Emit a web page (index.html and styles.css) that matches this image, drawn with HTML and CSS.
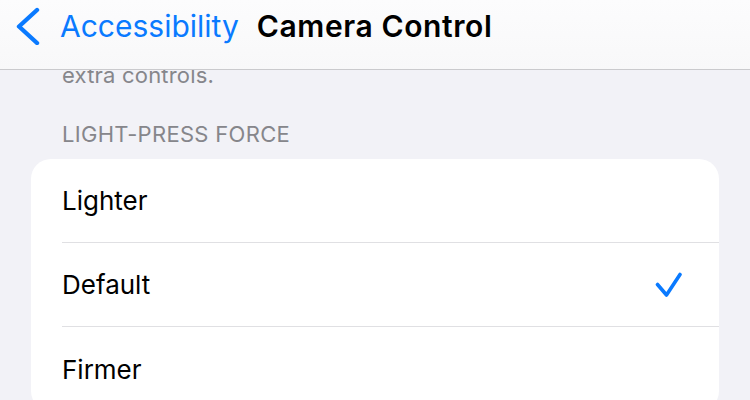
FILE: index.html
```html
<!DOCTYPE html>
<html lang="en">
<head>
<meta charset="utf-8">
<title>Camera Control</title>
<link rel="stylesheet" href="styles.css">
</head>
<body>
<div class="screen">
  <header class="nav">
    <a class="back">
      <svg class="chev" width="24" height="38" viewBox="0 0 24 38"><path d="M21 3 L3 19.5 L21 36" fill="none" stroke="#0a7aff" stroke-width="4.4" stroke-linecap="round" stroke-linejoin="round"/></svg>
      <span class="back-label">Accessibility</span>
    </a>
    <h1 class="title">Camera Control</h1>
  </header>
  <main class="content">
    <div class="clip">
      <p class="footnote">extra controls.</p>
    </div>
    <h2 class="section-head">LIGHT-PRESS FORCE</h2>
    <ul class="card">
      <li class="row"><div class="row-inner"><span class="label">Lighter</span></div></li>
      <li class="row"><div class="row-inner"><span class="label">Default</span>
        <svg class="check" width="28" height="28" viewBox="0 0 28 28"><path d="M2.5 13.5 L11.5 24 L25 3.5" fill="none" stroke="#0a7aff" stroke-width="3.6" stroke-linecap="round" stroke-linejoin="round"/></svg>
      </div></li>
      <li class="row last"><div class="row-inner"><span class="label">Firmer</span></div></li>
    </ul>
  </main>
</div>
</body>
</html>
```
FILE: styles.css
```css
* { box-sizing: border-box; }
html, body { margin: 0; padding: 0; }
body {
  width: 750px;
  height: 400px;
  overflow: hidden;
  background: #f2f2f7;
  font-family: Inter, "Noto Sans", sans-serif;
  -webkit-font-smoothing: antialiased;
}
.screen { display: flex; flex-direction: column; height: 400px; overflow: hidden; }
.nav {
  height: 70px;
  flex: none;
  display: flex;
  align-items: flex-start;
  background: linear-gradient(180deg, #fcfcfd 0%, #f8f8f9 100%);
  border-bottom: 1px solid #cacacd;
  padding: 7px 0 0 16px;
}
.back { display: flex; align-items: flex-start; color: #0a7aff; }
.chev { display: block; margin-right: 20px; }
.back-label { font-size: 30px; line-height: 38px; font-weight: 400; letter-spacing: 0; }
.title { margin: 0 0 0 18px; font-size: 30px; line-height: 38px; font-weight: 600; letter-spacing: 0.6px; color: #000; }
.content { flex: 1; padding: 0 31px; }
.clip { height: 22px; overflow: hidden; }
.footnote { margin: -9px 0 0 31px; font-size: 22px; line-height: 28px; color: #86868b; letter-spacing: 0.2px; }
.section-head {
  margin: 28px 0 0 31px;
  font-size: 22px;
  line-height: 28px;
  font-weight: 400;
  color: #86868b;
  letter-spacing: 0.3px;
}
.card {
  list-style: none;
  margin: 11px 0 0 0;
  padding: 0;
  background: #fff;
  border-radius: 20px;
  overflow: hidden;
}
.row { padding-left: 31px; }
.row-inner {
  height: 84px;
  display: flex;
  align-items: center;
  justify-content: space-between;
  padding-right: 36px;
  border-bottom: 1.5px solid #e0e0e3;
}
.row.last .row-inner { border-bottom: none; }
.label { font-size: 26px; color: #000; letter-spacing: 0; }
.check { display: block; }
```
